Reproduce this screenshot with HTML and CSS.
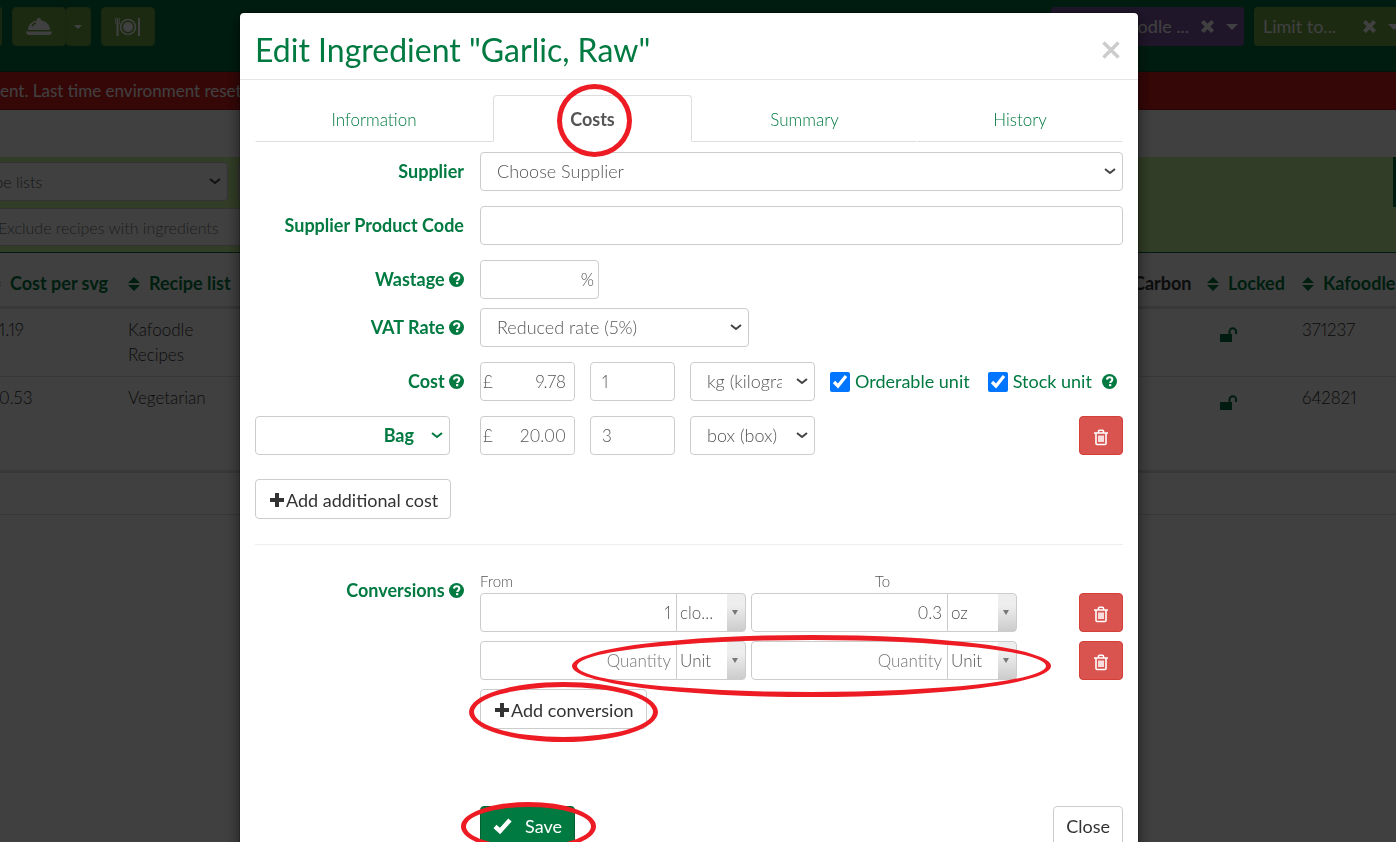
FILE: index.html
```html
<!DOCTYPE html>
<html lang="en">
<head>
    <meta charset="utf-8">
    <title>Edit Ingredient</title>
    <link rel="stylesheet" href="styles.css">
</head>
<body>
    <!-- shared icons -->
    <svg class="sprite" aria-hidden="true">
        <symbol id="help" viewBox="0 0 16 16">
            <circle cx="8" cy="8" r="8" fill="currentColor"/>
            <path d="M5.2 6.1C5.4 4.3 6.500 3.500 8.100 3.500c1.700 0 2.900 1 2.900 2.400 0 2-2.200 2-2.200 3.600" fill="none" stroke="#fff" stroke-width="2.200"/>
            <rect x="7.500" y="10.800" width="2.400" height="2.200" fill="#fff"/>
        </symbol>
        <symbol id="trash" viewBox="0 0 16 17">
            <path d="M1 4h14M5.500 3.500V2.200Q5.500 1.200 6.500 1.200h3q1 0 1 1v1.300M3 4.500V14.500Q3 15.500 4 15.500h8q1 0 1-1V4.500M6 6.500v6.500M8 6.500v6.500M10 6.500v6.500" fill="none" stroke="currentColor" stroke-width="1.600"/>
        </symbol>
        <symbol id="plus" viewBox="0 0 14 14">
            <path d="M5 0h4v5h5v4H9v5H5V9H0V5h5z" fill="currentColor"/>
        </symbol>
        <symbol id="times" viewBox="0 0 14 14">
            <path d="M3 0l4 4 4-4 3 3-4 4 4 4-3 3-4-4-4 4-3-3 4-4-4-4z" fill="currentColor"/>
        </symbol>
        <symbol id="caret" viewBox="0 0 12 6">
            <path d="M0 0h12L6 6z" fill="currentColor"/>
        </symbol>
        <symbol id="sort" viewBox="0 0 12 14">
            <path d="M6 0l6 6H0zM0 8h12l-6 6z" fill="currentColor"/>
        </symbol>
        <symbol id="unlock" viewBox="0 0 18 15">
            <path d="M0 7h12v8H0z" fill="currentColor"/>
            <path d="M9.500 7V4.500a3.300 3.300 0 0 1 6.600 0V7" fill="none" stroke="currentColor" stroke-width="2"/>
        </symbol>
    </svg>

    <div class="page">
        <header class="navbar">
            <div class="nav-group">
                <button class="nav-btn nav-first" aria-label="Ingredients"></button>
                <div class="nav-split">
                    <button class="nav-btn" aria-label="Recipes">
                        <svg width="26" height="18" viewBox="0 0 26 18"><path d="M2 12C2 6.500 6.500 3 11 2.500Q10.500 0 13 0t2 2.500C20 3 24 6.500 24 12zM0 13.500h26Q25.500 17 23 17H3Q.5 17 0 13.500z" fill="#fff"/><path d="M6 8q1.500-2.500 4-3" stroke="#70a848" fill="none" stroke-width="1.500"/></svg>
                    </button>
                    <button class="nav-btn nav-drop" aria-label="More recipes"><svg width="8" height="4"><use href="#caret"/></svg></button>
                </div>
                <button class="nav-btn" aria-label="Meals">
                    <svg width="26" height="20" viewBox="0 0 26 20"><g fill="none" stroke="#fff"><circle cx="13" cy="10" r="7.500" stroke-width="1.600"/><path d="M2.500 8v11M24 1v18" stroke-width="2"/><path d="M.8 1v6h3.400V1M2.500 1v7" stroke-width="1"/></g><circle cx="13" cy="10" r="5" fill="#fff"/></svg>
                </button>
            </div>
            <div class="nav-group nav-right">
                <button class="nav-pick purple"><span>Kafoodle ...</span><svg width="13" height="13"><use href="#times"/></svg><svg width="12" height="6"><use href="#caret"/></svg></button>
                <button class="nav-pick limit"><span>Limit to...</span><svg width="13" height="13"><use href="#times"/></svg><svg width="12" height="6"><use href="#caret"/></svg></button>
            </div>
        </header>
        <div class="alert">ent. Last time environment reset</div>
        <div class="filters">
            <div class="filter-row">
                <select aria-label="Recipe lists"><option>All recipe lists</option></select>
                <select aria-label="Category"><option></option></select>
            </div>
            <input class="exclude" type="text" aria-label="Exclude ingredients" placeholder="Exclude recipes with ingredients">
            <button class="search" aria-label="Search"></button>
        </div>
        <table class="recipes">
            <thead>
                <tr>
                    <th class="col-cost"><svg width="12" height="14"><use href="#sort"/></svg>Cost per svg</th>
                    <th class="col-list"><svg width="12" height="14"><use href="#sort"/></svg>Recipe list</th>
                    <th></th>
                    <th class="col-carbon">Carbon</th>
                    <th class="col-locked"><svg width="12" height="14"><use href="#sort"/></svg>Locked</th>
                    <th class="col-id"><svg width="12" height="14"><use href="#sort"/></svg>Kafoodle</th>
                </tr>
            </thead>
            <tbody>
                <tr>
                    <td>£1.19</td><td>Kafoodle Recipes</td><td></td><td></td>
                    <td class="lock"><svg width="18" height="15"><use href="#unlock"/></svg></td>
                    <td>371237</td>
                </tr>
                <tr class="tall">
                    <td>£0.53</td><td>Vegetarian</td><td></td><td></td>
                    <td class="lock"><svg width="18" height="15"><use href="#unlock"/></svg></td>
                    <td>642821</td>
                </tr>
            </tbody>
            <tfoot><tr><td colspan="6"></td></tr></tfoot>
        </table>
    </div>

    <div class="backdrop">
        <div class="modal" role="dialog" aria-labelledby="modal-title">
            <div class="modal-header">
                <h1 id="modal-title">Edit Ingredient "Garlic, Raw"</h1>
                <button class="dismiss" aria-label="Dismiss"><svg width="18" height="18" viewBox="0 0 18 18"><path d="M1.500 1.500l15 15M16.500 1.500l-15 15" stroke="currentColor" stroke-width="3.500"/></svg></button>
            </div>
            <div class="modal-body">
                <nav class="tabs">
                    <a href="#information">Information</a>
                    <a href="#costs" class="active">Costs<span class="mark mark-tab"></span></a>
                    <a href="#summary">Summary</a>
                    <a href="#history">History</a>
                </nav>
                <form>
                    <div class="row">
                        <label for="supplier">Supplier</label>
                        <select id="supplier"><option>Choose Supplier</option></select>
                    </div>
                    <div class="row">
                        <label for="code">Supplier Product Code</label>
                        <input type="text" id="code">
                    </div>
                    <div class="row close-row">
                        <label for="wastage">Wastage <svg width="15" height="15"><use href="#help"/></svg></label>
                        <div class="addon wastage"><input type="text" id="wastage"><span>%</span></div>
                    </div>
                    <div class="row">
                        <label for="vat">VAT Rate <svg width="15" height="15"><use href="#help"/></svg></label>
                        <select id="vat" class="vat"><option>Reduced rate (5%)</option></select>
                    </div>
                    <div class="row">
                        <label for="cost">Cost <svg width="15" height="15"><use href="#help"/></svg></label>
                        <div class="fields">
                            <div class="addon price"><span>£</span><input type="text" id="cost" value="9.78"></div>
                            <input type="text" class="qty" aria-label="Cost quantity" value="1">
                            <select class="unit" aria-label="Cost unit"><option>kg (kilogram)</option></select>
                            <div class="checks">
                                <label><input type="checkbox" checked>Orderable unit</label>
                                <label><input type="checkbox" checked>Stock unit</label>
                                <svg width="15" height="15"><use href="#help"/></svg>
                            </div>
                        </div>
                    </div>
                    <div class="row">
                        <select class="pack" aria-label="Pack type"><option>Bag</option></select>
                        <div class="fields">
                            <div class="addon price"><span>£</span><input type="text" aria-label="Pack cost" value="20.00"></div>
                            <input type="text" class="qty" aria-label="Pack quantity" value="3">
                            <select class="unit" aria-label="Pack unit"><option>box (box)</option></select>
                            <button type="button" class="delete" aria-label="Delete cost"><svg width="16" height="17"><use href="#trash"/></svg></button>
                        </div>
                    </div>
                    <button type="button" class="btn add-cost"><svg width="14" height="14"><use href="#plus"/></svg>Add additional cost</button>
                    <hr>
                    <div class="row conversions">
                        <label for="from1">Conversions <svg width="15" height="15"><use href="#help"/></svg></label>
                        <div class="conv-list">
                            <div class="conv-head"><span>From</span><span>To</span></div>
                            <div class="conv-row">
                                <div class="pair"><input type="text" id="from1" value="1"><select aria-label="From unit 1"><option>clo...</option></select></div>
                                <div class="pair"><input type="text" aria-label="To quantity 1" value="0.3"><select aria-label="To unit 1"><option>oz</option></select></div>
                                <button type="button" class="delete" aria-label="Delete conversion 1"><svg width="16" height="17"><use href="#trash"/></svg></button>
                            </div>
                            <div class="conv-row">
                                <div class="pair"><input type="text" aria-label="From quantity 2" placeholder="Quantity"><select aria-label="From unit 2"><option>Unit</option></select></div>
                                <div class="pair"><input type="text" aria-label="To quantity 2" placeholder="Quantity"><select aria-label="To unit 2"><option>Unit</option></select></div>
                                <button type="button" class="delete" aria-label="Delete conversion 2"><svg width="16" height="17"><use href="#trash"/></svg></button>
                                <span class="mark mark-units"></span>
                            </div>
                            <div class="marked"><button type="button" class="btn"><svg width="14" height="14"><use href="#plus"/></svg>Add conversion</button><span class="mark mark-add"></span></div>
                        </div>
                    </div>
                    <div class="actions">
                        <div class="marked"><button type="submit" class="btn save"><svg width="19" height="16" viewBox="0 0 19 16"><path d="M2 8.500l5 4.500L17 2" fill="none" stroke="#fff" stroke-width="4.500"/></svg>Save</button><span class="mark mark-save"></span></div>
                        <button type="button" class="btn">Close</button>
                    </div>
                </form>
            </div>
        </div>
    </div>
</body>
</html>
```
FILE: styles.css
```css
* {
    box-sizing: border-box;
}

body {
    margin: 0;
    height: 100vh;
    overflow: hidden;
    font-family: Lato, "Open Sans", sans-serif;
    font-size: 17px;
    font-weight: 300;
    font-variant-numeric: proportional-nums;
    line-height: 25px;
    color: #333;
    background-color: #fff;
}

button,
input,
select {
    font: inherit;
    color: inherit;
    margin: 0;
}

button {
    cursor: pointer;
}

.sprite {
    display: none;
}

/* page behind the dialog */
.navbar {
    display: flex;
    justify-content: space-between;
    height: 72px;
    padding-top: 7px;
    background-color: #007040;
    border-bottom: 1px solid #00502c;
}

.nav-group {
    display: flex;
    align-items: flex-start;
    gap: 10px;
}

.nav-btn {
    display: flex;
    align-items: center;
    justify-content: center;
    width: 54px;
    height: 39px;
    padding: 0;
    border: 1px solid #649840;
    border-radius: 4px;
    background-color: #70a848;
    color: #fff;
}

.nav-first {
    width: 2px;
    border-radius: 0 4px 4px 0;
}

.nav-split {
    display: flex;
}

.nav-drop {
    width: 25px;
    border-left: none;
}

.nav-right {
    margin-right: -20px;
}

.nav-pick {
    display: flex;
    align-items: center;
    gap: 12px;
    width: 162px;
    height: 39px;
    padding: 0 6px 0 9px;
    border: none;
    border-radius: 4px;
    background-color: #70a848;
    color: #fff;
    font-size: 18px;
    font-weight: 400;
}

.nav-pick span {
    flex: 1;
    text-align: left;
}

.limit {
    padding-right: 16px;
}

.purple {
    width: 193px;
    background-color: #8058a8;
}

.purple span {
    text-align: right;
}

.alert {
    height: 38px;
    padding: 6px 0;
    background-color: #d41c1c;
    border-bottom: 1px solid #a81414;
    color: #fff;
    font-weight: 400;
    white-space: nowrap;
}

.filters {
    position: relative;
    margin-top: 47px;
    padding-top: 5px;
    height: 96px;
    background-color: #c4f498;
    border-bottom: 1px solid #007040;
}

.filter-row {
    display: flex;
    gap: 10px;
    margin-left: -69px;
    padding-bottom: 7px;
}

.filters select {
    width: 297px;
    font-size: 16px;
}

.filters .exclude {
    display: block;
    width: 50%;
    height: 38px;
    margin-left: -14px;
    font-size: 16px;
}

.search {
    position: absolute;
    top: 0;
    right: 0;
    width: 3px;
    height: 50px;
    padding: 0;
    border: none;
    background-color: #007040;
}

.recipes {
    width: calc(100% + 38px);
    margin-left: -19px;
    table-layout: fixed;
    border-collapse: collapse;
}

.recipes th {
    height: 54px;
    padding: 16px 8px 8px;
    border-bottom: 3px solid #ddd;
    color: #007a41;
    font-size: 18px;
    font-weight: 700;
    text-align: left;
    white-space: nowrap;
}

.recipes th svg {
    margin-right: 9px;
    vertical-align: -1px;
}

.recipes td {
    height: 69px;
    padding: 8px;
    border-bottom: 1px solid #ddd;
    vertical-align: top;
}

.recipes .tall td {
    height: 95px;
    border-bottom: 3px solid #ddd;
}

.recipes tfoot td {
    height: 43px;
}

.recipes .lock {
    padding: 14px 21px;
    color: #007040;
}

.col-cost {
    width: 139px;
}

.col-list {
    width: 120px;
}

.recipes .col-carbon {
    width: 74px;
    color: #333;
}

.col-locked {
    width: 95px;
}

.col-id {
    width: 121px;
}

/* dialog */
.backdrop {
    position: fixed;
    inset: 0;
    overflow: hidden;
    padding: 12px 18px 0 0;
    background-color: rgba(0, 0, 0, 0.75);
}

.modal {
    max-width: 900px;
    min-height: 900px;
    margin: 0 auto;
    background-color: #fff;
    background-clip: padding-box;
    border: 1px solid rgba(0, 0, 0, 0.2);
    border-radius: 5px;
    box-shadow: 0 5px 15px rgba(0, 0, 0, 0.5);
}

.modal-header {
    display: flex;
    align-items: center;
    justify-content: space-between;
    height: 67px;
    padding: 0 15px;
    border-bottom: 1px solid #e5e5e5;
}

.modal-header h1 {
    margin: 0;
    padding-top: 8px;
    color: #007a41;
    font-size: 32px;
    line-height: 36px;
    font-weight: 400;
}

.dismiss {
    display: flex;
    margin-top: 8px;
    padding: 3px;
    border: none;
    background: none;
    color: #ccc;
}

.modal-body {
    padding: 15px;
}

.tabs {
    display: grid;
    grid-template-columns: 238fr 199fr 225fr 206fr;
    margin-bottom: 10px;
}

.tabs a {
    height: 47px;
    padding: 11px 0;
    border: 1px solid transparent;
    border-bottom-color: #ddd;
    color: #007a41;
    text-align: center;
    text-decoration: none;
}

.tabs .active {
    position: relative;
    border-color: #ddd;
    border-bottom-color: transparent;
    border-radius: 4px 4px 0 0;
    color: #555;
    font-size: 18px;
    font-weight: 700;
}

.row {
    display: grid;
    grid-template-columns: 210px 1fr;
    column-gap: 15px;
    align-items: center;
    margin-bottom: 15px;
}

.close-row {
    margin-bottom: 9px;
}

.row > label {
    padding-right: 1px;
    color: #007a41;
    font-size: 18px;
    font-weight: 700;
    text-align: right;
}

.row > label svg {
    vertical-align: -1px;
}

input[type="text"],
select {
    width: 100%;
    height: 39px;
    padding: 0 11px;
    border: 1px solid #ccc;
    border-radius: 4px;
    background-color: #fff;
    color: #555;
}

input::placeholder {
    color: #777;
    opacity: 1;
}

select {
    appearance: none;
    padding: 0 32px 0 16px;
    font-size: 18px;
    background-image: url("data:image/svg+xml,%3Csvg xmlns='http://www.w3.org/2000/svg' width='12' height='8'%3E%3Cpath d='M1 1l5 4 5-4' fill='none' stroke='%23444' stroke-width='2'/%3E%3C/svg%3E");
    background-repeat: no-repeat;
    background-position: right 6px center;
}

.vat {
    width: 269px;
}

.addon {
    display: flex;
    align-items: center;
    height: 39px;
    border: 1px solid #ccc;
    border-radius: 4px;
    color: #555;
}

.addon input[type="text"] {
    height: 37px;
    min-width: 0;
    padding: 0 8px 0 0;
    border: none;
    text-align: right;
}

.wastage {
    width: 119px;
    padding-right: 4px;
}

.price {
    width: 95px;
    padding-left: 2px;
}

.fields {
    display: flex;
    align-items: center;
    gap: 15px;
}

.fields .qty {
    width: 85px;
}

.fields .unit {
    width: 125px;
}

.row .pack {
    width: 195px;
    padding-right: 35px;
    color: #007a41;
    font-weight: 700;
    text-align: right;
    text-align-last: right;
    background-image: url("data:image/svg+xml,%3Csvg xmlns='http://www.w3.org/2000/svg' width='12' height='8'%3E%3Cpath d='M1 1l5 4 5-4' fill='none' stroke='%23007a41' stroke-width='2'/%3E%3C/svg%3E");
}

.checks {
    display: flex;
    flex: 1;
    align-items: center;
    gap: 10px;
    color: #007a41;
    font-size: 18px;
    font-weight: 400;
    white-space: nowrap;
}

.checks label {
    display: flex;
    align-items: center;
    gap: 5px;
}

.checks label:first-child {
    margin-right: 8px;
}

.checks input {
    width: 20px;
    height: 20px;
    accent-color: #0075ff;
}

.delete {
    display: flex;
    align-items: center;
    justify-content: center;
    width: 44px;
    height: 39px;
    margin-left: auto;
    padding: 4px 0 0;
    border: 1px solid #d43f3a;
    border-radius: 4px;
    background-color: #d9534f;
    color: #fff;
}

.btn {
    display: inline-flex;
    align-items: center;
    gap: 2px;
    height: 40px;
    padding: 2px 12px 0 14px;
    border: 1px solid #ccc;
    border-radius: 4px;
    background-color: #fff;
    color: #333;
    font-size: 18px;
    font-weight: 400;
}

.add-cost {
    margin-top: 9px;
}

hr {
    margin: 25px 0;
    border: none;
    border-top: 1px solid #eee;
}

.conversions {
    align-items: start;
}

.conversions > label {
    padding-top: 8px;
}

.conv-list {
    display: grid;
    row-gap: 9px;
}

.conv-head {
    display: grid;
    grid-template-columns: 395px 1fr;
    margin-bottom: -9px;
    font-size: 15px;
    line-height: 23px;
    color: #555;
}

.conv-row {
    position: relative;
    display: flex;
    gap: 5px;
}

.pair {
    display: flex;
    width: 266px;
}

.pair input[type="text"] {
    flex: 1;
    min-width: 0;
    padding: 0 5px;
    border-radius: 4px 0 0 4px;
    text-align: right;
}

.pair select {
    width: 70px;
    margin-left: -1px;
    padding: 0 20px 0 3px;
    font-size: 17px;
    border-radius: 0 4px 4px 0;
    background-image: url("data:image/svg+xml,%3Csvg xmlns='http://www.w3.org/2000/svg' width='6' height='5'%3E%3Cpath d='M0 0h6l-3 5z' fill='%23777'/%3E%3C/svg%3E"), linear-gradient(#eee 30%, #ccc);
    background-position: right 7px center, right top;
    background-size: 6px 5px, 18px 100%;
}

.actions {
    display: flex;
    justify-content: space-between;
    margin-top: 77px;
}

.save {
    gap: 13px;
    padding-left: 12px;
    border-color: #00602f;
    background-color: #007a41;
    color: #fff;
}

.actions .marked {
    margin-left: 225px;
}

.actions .btn {
    padding-top: 0;
}

.actions > .btn {
    padding-left: 12px;
}

/* red rings */
.marked {
    position: relative;
    justify-self: start;
}

.mark {
    position: absolute;
    border: 5px solid #ed1c24;
    border-radius: 50%;
    pointer-events: none;
}

.mark-tab {
    top: -12px;
    left: calc(50% - 36px);
    width: 75px;
    height: 73px;
}

.mark-units {
    top: -6px;
    left: 92px;
    width: 479px;
    height: 62px;
}

.mark-add {
    inset: -7px -11px -13px;
}

.mark-save {
    inset: -4px -21px -5px -19px;
}
```
